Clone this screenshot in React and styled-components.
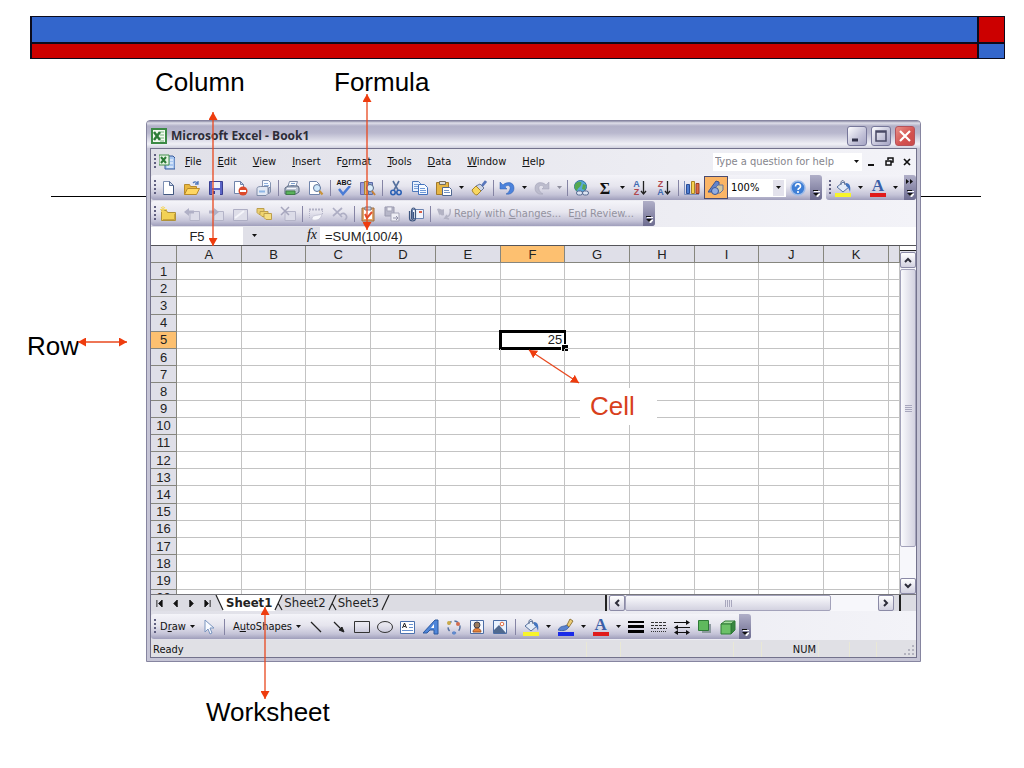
import React from "react";
import styled, { createGlobalStyle } from "styled-components";

const GlobalStyle = createGlobalStyle`
  * {
    box-sizing: border-box;
  }
  body {
    margin: 0;
    background: #fff;
    font-family: "Liberation Sans", Arial, sans-serif;
  }
  button {
    margin: 0;
    padding: 0;
    border: 0;
    background: none;
    font: inherit;
    color: inherit;
  }
`;

const Slide = styled.main`
  position: relative;
  min-height: 100vh;
  padding-top: 16px;
  overflow: hidden;
`;

const Banner = styled.header`
  display: grid;
  grid-template-columns: 1fr 25px;
  grid-template-rows: 25px 14px;
  gap: 2px;
  margin: 0 19px 0 30px;
  padding: 1px 1px 1px 2px;
  background: #0b0b1c;
`;

const Block = styled.div`
  background: ${({ $red }) => ($red ? "#cc0000" : "#3366cc")};
`;

const Rule = styled.div`
  position: absolute;
  top: 196px;
  left: 51px;
  right: 43px;
  height: 1px;
  background: #000;
`;

const Label = styled.div`
  position: absolute;
  left: ${({ $x }) => $x}px;
  top: ${({ $y }) => $y}px;
  font-size: 26px;
  line-height: 30px;
  color: #000;
`;

const CellLabel = styled(Label)`
  padding: 3px 22px 4px 10px;
  background: #fff;
  color: #d8401c;
`;

const Arrows = styled.svg`
  position: absolute;
  top: 0;
  left: 0;
  pointer-events: none;
`;

const Window = styled.section`
  position: relative;
  margin: 61px 103px 0 146px;
  padding: 0 3px 3px;
  border: 1px solid #8685a0;
  border-radius: 4px 4px 0 0;
  background: #c6c5d6;
  font-family: "DejaVu Sans Condensed", Tahoma, "DejaVu Sans", sans-serif;
  font-size: 11px;
  color: #111;
`;

const TitleBar = styled.div`
  display: flex;
  align-items: center;
  height: 27px;
  margin: 0 -3px;
  padding: 2px 5px 0 4px;
  border-radius: 3px 3px 0 0;
  background: linear-gradient(
    #8f8ea8 0,
    #e0e0ea 2px,
    #b2b1c8 5px,
    #b9b8ce 12px,
    #f0f0f6 23px,
    #d0d0de 100%
  );
  h1 {
    flex: 1;
    margin: 0 0 0 4px;
    font-family: "Open Sans", "Trebuchet MS", sans-serif;
    font-size: 12px;
    font-weight: 700;
    line-height: 16px;
    color: #2d2d38;
  }
`;

const CaptionButton = styled.button`
  display: flex;
  width: 20px;
  height: 20px;
  margin-left: 4px;
  border: 1px solid ${({ $close }) => ($close ? "#b5525a" : "#77779a")};
  border-radius: 3px;
  background: ${({ $close }) =>
    $close
      ? "linear-gradient(135deg, #e89088, #d4514f 60%, #c94a4a)"
      : "linear-gradient(135deg, #fdfdff, #c3c2d8 60%, #a6a5c4)"};
`;

const Client = styled.div`
  border: 1px solid #73728c;
  background: #e0e0e8;
`;

const MenuBar = styled.nav`
  display: flex;
  align-items: center;
  height: 25px;
  background: linear-gradient(90deg, #e0e0e8, #f3f3f8);
`;

const MenuItem = styled.button`
  padding: 0 8px;
  line-height: 16px;
`;

const HelpBox = styled.div`
  display: flex;
  align-items: center;
  width: 149px;
  height: 18px;
  margin-left: auto;
  background: #fff;
  input {
    flex: 1;
    min-width: 0;
    padding: 0 2px;
    border: 0;
    background: none;
    font: inherit;
  }
  input::placeholder {
    color: #85858c;
    opacity: 1;
  }
`;

const DocButton = styled.button`
  display: flex;
  justify-content: center;
  width: 18px;
`;

const ToolRow = styled.div`
  display: flex;
  gap: 4px;
  height: ${({ $h }) => $h}px;
  padding-top: ${({ $top }) => $top || 0}px;
  background: linear-gradient(90deg, #e0e0e8, #f3f3f8);
`;

const Toolbar = styled.div`
  display: flex;
  align-items: center;
  height: 25px;
  flex: ${({ $grow }) => ($grow ? 1 : "none")};
  border-radius: 3px;
  overflow: hidden;
  background: linear-gradient(#f4f4f9, #e6e5ee 45%, #c4c3d7 80%, #9f9ebb);
  color: ${({ $disabled }) => ($disabled ? "#93929f" : "#111")};
`;

const Handle = styled.span`
  width: 5px;
  height: 16px;
  background: repeating-linear-gradient(#5f5f80 0 2px, transparent 2px 4px) 3px 0 /
    2px 100% no-repeat;
`;

const Tool = styled.button`
  display: flex;
  align-items: center;
  justify-content: center;
  width: ${({ $w }) => $w || 24}px;
  height: 23px;
  ${({ $on }) => $on && "border: 1px solid #4b4b6f; background: #fbb566;"}
`;

const TextTool = styled.button`
  display: flex;
  align-items: center;
  gap: ${({ $tight }) => ($tight ? 2 : 4)}px;
  padding: 0 3px 0 4px;
  line-height: 16px;
  white-space: nowrap;
`;

const Separator = styled.span`
  width: ${({ $w }) => $w || 4}px;
  height: 16px;
  background: linear-gradient(#8584a4, #8584a4) center / 1px 100% no-repeat;
`;

const CaretButton = styled.button`
  display: flex;
  align-items: center;
  justify-content: center;
  width: ${({ $w }) => $w || 11}px;
  height: 16px;
`;

const More = styled.button`
  display: flex;
  flex-direction: column;
  align-items: center;
  justify-content: ${({ $double }) => ($double ? "space-between" : "flex-end")};
  width: 12px;
  height: 25px;
  margin-left: ${({ $gap }) => ($gap ? `${$gap}px` : "auto")};
  padding: 4px 0 3px;
  background: linear-gradient(#b0afc8, #6d6c90);
`;

const Zoom = styled.div`
  display: flex;
  align-items: center;
  width: 58px;
  height: 18px;
  padding-right: 1px;
  background: #fff;
  input {
    width: 45px;
    padding: 0 0 0 3px;
    border: 0;
    background: none;
    font: inherit;
  }
  button {
    background: #e3e2ec;
  }
`;

const FormulaBar = styled.div`
  display: flex;
  align-items: stretch;
  height: 18px;
  font-family: "Liberation Sans", Arial, sans-serif;
  font-size: 13px;
  input {
    border: 0;
    background: #fff;
    font: inherit;
    color: #222;
  }
  .name {
    width: 92px;
    padding: 0;
    text-align: center;
  }
  .fx {
    width: 55px;
    text-align: right;
    padding-right: 3px;
    font-family: "Liberation Serif", serif;
    font-style: italic;
    font-size: 14px;
    line-height: 16px;
  }
  .formula {
    flex: 1;
    min-width: 0;
    padding: 0 5px;
  }
`;

const SheetArea = styled.div`
  display: flex;
  height: 349px;
  overflow: hidden;
  border-top: 1px solid #55555a;
  background: #fff;
`;

const GridBox = styled.div`
  flex: 1;
  min-width: 0;
  overflow: hidden;
`;

const Grid = styled.table`
  width: 100%;
  height: 361px;
  table-layout: fixed;
  border-collapse: separate;
  border-spacing: 0;
  font-family: "Liberation Sans", Arial, sans-serif;
  font-size: 13px;
  line-height: 15px;
  color: #222;
  col.rows {
    width: 26px;
  }
  col.rest {
    width: 11px;
  }
`;

const Head = styled.th`
  padding: 0;
  height: 17px;
  border-right: 1px solid #86867e;
  border-bottom: 1px solid #86867e;
  background: ${({ $on }) => ($on ? "#fdc070" : "#dfdfe8")};
  font-weight: 400;
  text-align: center;
`;

const Cell = styled.td`
  position: relative;
  padding: 0 2px 0 0;
  border-right: 1px solid #c3c3c3;
  border-bottom: 1px solid #c3c3c3;
  text-align: right;
`;

const Selection = styled.span`
  position: absolute;
  inset: -2px;
  border: 3px solid #000;
  border-right-width: 2px;
  &::after {
    content: "";
    position: absolute;
    right: -4px;
    bottom: -4px;
    width: 6px;
    height: 6px;
    border: 1px solid #fff;
    border-width: 1px 0 0 1px;
    background: #000;
  }
`;

const VScroll = styled.div`
  display: flex;
  flex-direction: column;
  width: 16px;
  margin-top: 4px;
  padding-top: 1px;
  border-top: 1px solid #222;
  background: #e0e0e8;
`;

const HScroll = styled.div`
  display: flex;
  width: 294px;
  padding: 0 5px 0 2px;
  border-left: 2px solid #222;
`;

const ScrollButton = styled.button`
  display: flex;
  align-items: center;
  justify-content: center;
  width: 16px;
  height: 16px;
  border: 1px solid #8b8aa6;
  border-radius: 2px;
  background: linear-gradient(#fff, #d2d1e0);
`;

const Track = styled.div`
  display: flex;
  flex-direction: ${({ $row }) => ($row ? "row" : "column")};
  flex: 1;
  padding: ${({ $row }) => ($row ? "0 47px 0 0" : "1px 0 31px")};
  background: #f7f7fb;
`;

const Thumb = styled.div`
  display: flex;
  align-items: center;
  justify-content: center;
  flex: 1;
  border: 1px solid #a3a2ba;
  border-radius: 2px;
  background: linear-gradient(
    ${({ $row }) => ($row ? "180deg" : "90deg")},
    #fafafd,
    #d3d2e0
  );
  &::after {
    content: "";
    width: 7px;
    height: 7px;
    background: repeating-linear-gradient(
      ${({ $row }) => ($row ? "90deg" : "180deg")},
      #a8a7bd 0 1px,
      #e4e3ee 1px 2px
    );
  }
`;

const TabRow = styled.div`
  display: flex;
  height: 17px;
  border-top: 1px solid #77777c;
  background: #dcdce3;
  .fill {
    flex: 1;
  }
  .corner {
    width: 17px;
    border-left: 2px solid #222;
  }
`;

const NavButton = styled.button`
  display: flex;
  align-items: center;
  justify-content: center;
  width: 16px;
  height: 16px;
`;

const Tab = styled.button`
  height: 16px;
  padding: 0 1px;
  font-size: 13px;
  line-height: 14px;
  color: #222;
  background: ${({ $on }) => ($on ? "#fff" : "transparent")};
  font-weight: ${({ $on }) => ($on ? 700 : 400)};
`;

const StatusBar = styled.footer`
  display: flex;
  align-items: center;
  height: 17px;
  padding: 2px 0 0 2px;
  background: #e0e0e5;
  .ready {
    flex: 1;
  }
`;

const StatusCell = styled.span`
  width: ${({ $w }) => $w}px;
  height: 15px;
  padding-right: 2px;
  border-left: 1px solid #e9e8d6;
  line-height: 15px;
  text-align: right;
`;

const icons = {
  excel: (
    <>
      <path d="M1 1h14v14H1z" fill="#f4faf2" stroke="#3c8a45" strokeWidth="2" />
      <path d="M9 4h4M9 7h4M9 10h4M9 13h4" stroke="#75b57b" />
      <path d="M3 4l6 8M9 4l-6 8" stroke="#2d7b37" strokeWidth="2.5" />
    </>
  ),
  book: (
    <>
      <path d="M6 2h8l2 2v11H6z" fill="#a9c7f1" stroke="#35589b" />
      <path d="M11 6h3M11 9h3M8 13h6" stroke="#fff" />
      <path d="M0 1h10v10H0z" fill="#e7f4e5" stroke="#44904c" />
      <path d="M2 3l5 6M7 3l-5 6" stroke="#2d7b37" strokeWidth="2" />
    </>
  ),
  page: (
    <>
      <path d="M3.5 1.5h6l4 4v9h-10z" fill="#fff" stroke="#7d8fb3" />
      <path d="M13.500 5.500v9h-10" fill="none" stroke="#42577f" />
      <path d="M9.500 1.500v4h4z" fill="#cfd9ec" stroke="#5d7199" />
    </>
  ),
  open: (
    <>
      <path d="M.5 14.500v-10h5l1 2h6v3" fill="#e9b73f" stroke="#b88a2c" />
      <path d="M.5 14.500l3-6h12l-3 6z" fill="#ffd761" stroke="#b88a2c" />
      <path d="M9 3c2-2 4-1 5 1m0-3v3h-3" fill="none" stroke="#4d76ba" strokeWidth="1.3" />
    </>
  ),
  save: (
    <>
      <path d="M1.500 1.500h13v13h-13z" fill="#5b64c6" stroke="#3a3f92" />
      <path d="M4 2h8v6H4z" fill="#edf1fa" />
      <path d="M4 10h8v5H4z" fill="#c9cde8" />
      <path d="M5 11h2v3H5z" fill="#3a3f92" />
    </>
  ),
  permission: (
    <>
      <path d="M2.500 1.500h6l3 3v9h-9z" fill="#fff" stroke="#7084ab" />
      <path d="M8.500 1.500v3h3z" fill="#cfd9ec" stroke="#7084ab" />
      <circle cx="11" cy="11" r="4.500" fill="#dc4a2c" />
      <path d="M8 11h6" stroke="#fff" strokeWidth="2" />
    </>
  ),
  mail: (
    <>
      <path d="M6.500.5h6l2 2v9h-8z" fill="#f7faff" stroke="#8594b2" />
      <path d="M8 3.500h4M8 5.500h5" stroke="#8fb0dd" />
      <path d="M1 8.500c0-2 3-2 5-2h6v7l-2 2H1z" fill="#e3e9f4" stroke="#7e8ba7" />
      <path d="M3 10.500h6v2H3z" fill="#8fb7e6" />
      <path d="M12.500 8l2-1v5l-2 2z" fill="#b9c3d8" stroke="#7e8ba7" />
    </>
  ),
  print: (
    <>
      <path d="M5.500 1.500h8l-2 6h-8z" fill="#fbfdff" stroke="#7e8ba7" />
      <path d="M7 3.500h4M6.500 5.500h4" stroke="#7fa0cf" />
      <path d="M1 8l3-2h10l1 2v4l-3 2H1z" fill="#b9c1d0" stroke="#56657f" />
      <path d="M2 11h9v3.500H2z" fill="#59b25a" stroke="#3f7c47" />
      <path d="M3 8.500h9" stroke="#f4f6fb" />
    </>
  ),
  preview: (
    <>
      <path d="M1.500 1.500h7l3 3v10h-10z" fill="#fff" stroke="#7084ab" />
      <circle cx="9" cy="8" r="3.500" fill="#cfe8fb" stroke="#5d7399" />
      <path d="M11.500 11l3 3.500" stroke="#c8933a" strokeWidth="2.200" />
    </>
  ),
  research: (
    <>
      <path d="M.5 2.500h4v12h-4z" fill="#9a9bd8" stroke="#6a6bb0" />
      <path d="M4.500 1.500h4v13h-4z" fill="#e0bf6c" stroke="#a5803a" />
      <path d="M8.500 2.500h4v12h-4z" fill="#92a6d8" stroke="#5a68a4" />
      <circle cx="10" cy="8" r="3.500" fill="#d9edfb" stroke="#566887" />
      <path d="M12 11l3 4" stroke="#c8833a" strokeWidth="2" />
    </>
  ),
  cut: (
    <>
      <path d="M5 1l5 9M11 1L6 10" stroke="#56719f" strokeWidth="1.6" />
      <circle cx="5" cy="12.5" r="2.2" fill="none" stroke="#2d62b5" strokeWidth="1.6" />
      <circle cx="11" cy="12.5" r="2.2" fill="none" stroke="#2d62b5" strokeWidth="1.6" />
    </>
  ),
  copy: (
    <>
      <path d="M.5 1.500h6l2 2v8h-8z" fill="#e9f2ff" stroke="#4f79ba" />
      <path d="M2 4.500h4M2 6.500h4M2 8.500h4" stroke="#7da2d8" />
      <path d="M6.500 4.500h6l3 3v7h-9z" fill="#f5f9ff" stroke="#4271bd" />
      <path d="M8 8.500h5M8 10.500h6M8 12.500h6" stroke="#6d98d7" />
    </>
  ),
  paste: (
    <>
      <path d="M.5 2.500h12v12H.5z" fill="#e5b544" stroke="#a37a2c" />
      <path d="M3.500 1.500h6v3h-6z" fill="#ddd" stroke="#776d59" />
      <path d="M6.500 7.500h7l2 2v6h-9z" fill="#fff" stroke="#4f6690" />
      <path d="M8 10.500h5M8 12.500h6" stroke="#7392c4" />
    </>
  ),
  brush: (
    <>
      <path d="M15 1l-4 5" stroke="#5876bb" strokeWidth="2.8" />
      <path d="M9 4l4 4-3 3-5-5z" fill="#cdd5e6" stroke="#69799c" />
      <path d="M5 6l5 5-4 4c-2 0-4-2-5-5z" fill="#f8d760" stroke="#a8842c" />
    </>
  ),
  undo: (
    <path d="M1 2v7h7L6 7c3-3 6-1 5 2-1 3-2 4-4 5 5 1 8-2 8-6 0-6-7-7-11-3z" fill="#4c83dd" stroke="#2d5dac" strokeWidth=".5" />
  ),
  redo: (
    <path d="M15 2v7H8l2-2C7 4 4 6 5 9c0 2 2 4 4 5-5 1-8-2-8-6 0-6 7-7 11-3z" fill="#bcbccd" stroke="#a0a0b4" strokeWidth=".5" />
  ),
  link: (
    <>
      <circle cx="7.5" cy="6.5" r="6" fill="#58a8d8" stroke="#2d6f9e" />
      <path d="M3 3c3-2 7-2 5 2s-3 2-4 6C1 9 1 5 3 3zM10 4l3 1-1 5-3-1z" fill="#55a850" />
      <rect x="3.5" y="11" width="6" height="4" rx="2" fill="#dde5f3" stroke="#56698f" />
      <rect x="9.5" y="11" width="6" height="4" rx="2" fill="#dde5f3" stroke="#56698f" />
    </>
  ),
  chart: (
    <>
      <path d="M.5 1v13.500H15" fill="none" stroke="#7b8fbe" />
      <path d="M2.500 4.500h3v9h-3z" fill="#4e7ed2" stroke="#2c4e96" />
      <path d="M7.500 1.500h3v12h-3z" fill="#f7d352" stroke="#a98524" />
      <path d="M12 3.500h3v10h-3z" fill="#e06c45" stroke="#983a26" />
    </>
  ),
  drawing: (
    <>
      <path d="M0 12L8 1l3 1v10z" fill="#6284cc" stroke="#3c5592" />
      <path d="M7 8l3-3h5v5l-3 3H7z" fill="#d2c8a2" stroke="#66749c" />
      <circle cx="7" cy="11" r="3.5" fill="#94aee2" stroke="#3c5592" />
    </>
  ),
  bucket: (
    <>
      <path d="M2 8l6-5 6 5-6 5z" fill="#e3ebf7" stroke="#56719f" />
      <path d="M6 6c-1-6 4-6 4 0" fill="none" stroke="#5c6e8f" />
      <path d="M11 4c4 0 5 4 4 9-1-3-2-5-4-6z" fill="#4375c0" />
    </>
  ),
  pen: (
    <>
      <path d="M0 12c3-5 6-3 9-5l2 2c-3 4-6 4-11 3z" fill="#5a82cf" stroke="#3f62a5" />
      <path d="M9 7l3-6 3 2-4 6z" fill="#edcd75" stroke="#94793d" />
    </>
  ),
  folder: (
    <>
      <path d="M1.500 4.500h5l1 2h8v8h-14z" fill="#f2d155" stroke="#b0923a" />
      <path d="M3 13.500h12M14.500 8v6" stroke="#cba53c" />
      <path d="M3 0v7M0 3.500h7M1 1l4 5M5 1L1 6" stroke="#f3d662" />
    </>
  ),
  noteBack: (
    <>
      <path d="M6 5.500h9.500v9H6z" fill="#dcdce8" stroke="#b4b4c8" />
      <path d="M0 6l5-4v2.500h5v3H5V10z" fill="#b0b0c6" />
    </>
  ),
  noteNext: (
    <>
      <path d="M6 5.500h9.500v9H6z" fill="#dcdce8" stroke="#b4b4c8" />
      <path d="M11 6L6 2v2.500H1v3h5V10z" fill="#b0b0c6" />
    </>
  ),
  note: (
    <>
      <path d="M1.500 3.500h14v11h-14z" fill="#dedee9" stroke="#aeaec4" />
      <path d="M3 12l9-7" stroke="#f4f4fa" strokeWidth="2" />
    </>
  ),
  notes: (
    <>
      <path d="M1 2.500h7v6H3l-2-2z" fill="#ecd071" stroke="#bd9f4c" />
      <path d="M4 5.500h8v5H6l-2-2z" fill="#f0d56f" stroke="#bd9f4c" />
      <path d="M8 7.500h7.500v6H10l-2-2z" fill="#f5de83" stroke="#bd9f4c" />
    </>
  ),
  noteDelete: (
    <>
      <path d="M5 5.500h10.500v9H5z" fill="#dcdce8" stroke="#b4b4c8" />
      <path d="M1 1l8 8M9 1L1 9" stroke="#a6a6bd" strokeWidth="1.5" />
    </>
  ),
  ink: (
    <>
      <path d="M1 3.500h14" stroke="#b2b2c6" strokeDasharray="2 1" strokeWidth="2" />
      <path d="M1.500 5v7M14.500 5v3" stroke="#b2b2c6" strokeDasharray="1 1" />
      <path d="M4 14c-1-6 6-4 10-6-1 5-4 7-10 6z" fill="#f7f7fb" stroke="#c4c4d4" />
    </>
  ),
  cross: (
    <path d="M1 2l9 9M10 2l-9 8M8 9c4-4 9 1 5 5" fill="none" stroke="#aeaec4" strokeWidth="1.7" />
  ),
  clipboard: (
    <>
      <path d="M2 2h12v13H2z" fill="#e2a66b" stroke="#9c6c3f" />
      <path d="M4 4h8v9H4z" fill="#fff" />
      <path d="M5 1h6v3H5z" fill="#cfd3df" stroke="#767c90" />
      <path d="M5 8l2 4 5-6" fill="none" stroke="#e04c2e" strokeWidth="2" />
    </>
  ),
  saveGrey: (
    <>
      <path d="M1 1h9v9H1z" fill="#b7b7c9" stroke="#9999ae" />
      <path d="M3 1h5v4H3zM7 7h8v8H7z" fill="#eeeef5" stroke="#a5a5b8" />
      <path d="M9 12h5m-2-2l2 2-2 2" fill="none" stroke="#9292a9" />
    </>
  ),
  attach: (
    <>
      <path d="M4.500 3.500h11v9h-11z" fill="#f2f5fc" stroke="#6d84b0" />
      <path d="M11 5h3v2h-3z" fill="#d95f44" />
      <path d="M1.500 5v7c0 4 6 4 6 0V5c0-4-4-4-4 0v7c0 2 2 2 2 0V6" fill="none" stroke="#3d557e" strokeWidth="1.200" />
    </>
  ),
  reply: (
    <>
      <path d="M1 3c3-2 4 2 7 0v6c-3 2-3-2-5 0l2 5z" fill="#b3b3c4" />
      <path d="M14 3c1 5-1 8-5 9l2-3m-2 3l4 1" fill="none" stroke="#b3b3c4" strokeWidth="1.5" />
    </>
  ),
  pointer: (
    <path d="M4 1v12l3-3 2 5 2-1-2-5h4z" fill="#f7faff" stroke="#7a95bf" />
  ),
  line: <path d="M3 3l10 10" stroke="#222" strokeWidth="1.2" />,
  arrow: (
    <>
      <path d="M3 3l7 7" stroke="#222" strokeWidth="1.2" />
      <path d="M13 13l-5-2 3-3z" fill="#222" stroke="#222" />
    </>
  ),
  rect: <path d="M.5 2.500h15v11H.5z" fill="none" stroke="#333" />,
  oval: (
    <ellipse cx="8" cy="8" rx="7.5" ry="5.5" fill="none" stroke="#333" />
  ),
  textbox: (
    <>
      <path d="M.5 2.500h14v12H.5z" fill="#fff" stroke="#4c72ae" />
      <path d="M2.500 9l2-5 2 5M3.500 7.500h2" fill="none" stroke="#222" />
      <path d="M9 5.500h4M9 8.500h4M2 11.500h11" stroke="#6590cf" />
    </>
  ),
  wordart: (
    <>
      <path d="M0 14L12 1h3v14h-4v-4H7l-3 3z" fill="#4f86da" stroke="#2c589e" />
      <path d="M8 9h3V5z" fill="#fff" />
    </>
  ),
  diagram: (
    <>
      <circle cx="8" cy="8" r="6" fill="none" stroke="#56719f" strokeWidth="1.5" strokeDasharray="4 3" />
      <circle cx="3" cy="4" r="2" fill="#c9a949" />
      <circle cx="12" cy="5" r="2" fill="#d46c4e" />
      <circle cx="8" cy="14" r="1.8" fill="#5f8ad0" />
    </>
  ),
  clipart: (
    <>
      <path d="M1.500 1.500h13v13h-13z" fill="#f4f8ff" stroke="#4c6da5" />
      <circle cx="8" cy="6" r="3" fill="#9c7b5d" stroke="#3e4151" />
      <path d="M4 13c0-5 8-5 8 0z" fill="#e8843a" stroke="#9b5023" />
    </>
  ),
  picture: (
    <>
      <path d="M1.500 1.500h13v13h-13z" fill="#eaf3ff" stroke="#4c6da5" />
      <circle cx="10" cy="5" r="1.8" fill="#fff" stroke="#e36b3d" />
      <path d="M2 14v-3l5-5 7 8z" fill="#50698f" />
    </>
  ),
  weight: (
    <>
      <path d="M0 3h16" stroke="#000" strokeWidth="2" />
      <path d="M0 7.5h16" stroke="#000" strokeWidth="3" />
      <path d="M0 12.5h16" stroke="#000" strokeWidth="3" />
    </>
  ),
  dash: (
    <>
      <path d="M0 3.5h16M0 6.5h16" stroke="#333" strokeDasharray="3 1" />
      <path d="M0 9.5h16" stroke="#333" strokeDasharray="2 1" />
      <path d="M0 12.5h16" stroke="#333" strokeDasharray="1 1" />
    </>
  ),
  arrows: (
    <>
      <path d="M0 3.5h14M2 8.5h14M1 13.5h14" stroke="#111" />
      <path d="M16 3.5l-4-2.5v5zM0 8.5l4-2.5v5zM16 13.5l-4-2.5v5zM0 13.5l4-2.5v5z" fill="#111" />
    </>
  ),
  shadow: (
    <>
      <path d="M5 5h9v9H5z" fill="#8e9aa0" />
      <path d="M1.500 1.500h10v10h-10z" fill="#5fb95d" stroke="#2f7a37" />
    </>
  ),
  cube: (
    <>
      <path d="M1 5l4-3h10l-4 3z" fill="#a6dda0" stroke="#2f7a37" />
      <path d="M11 5l4-3v9l-4 4z" fill="#388740" stroke="#2f7a37" />
      <path d="M1 5h10v10H1z" fill="#6cc168" stroke="#2f7a37" />
    </>
  ),
  help: (
    <>
      <circle cx="8" cy="8" r="7" fill="#3f7fd6" stroke="#9fbce8" strokeWidth="1.5" />
      <path d="M5.5 6.5c0-4 5-3 5 0 0 2-2.5 1.5-2.5 3.5M8 11v2" fill="none" stroke="#fff" strokeWidth="1.6" />
    </>
  ),
};

const Svg = ({ name }) => (
  <svg width="16" height="16" viewBox="0 0 16 16" aria-hidden="true">
    {icons[name]}
  </svg>
);

const Triangle = ({ dim }) => (
  <svg width="5" height="3" viewBox="0 0 5 3" aria-hidden="true">
    <path d="M0 0h5L2.5 3z" fill={dim ? "#8e8e9c" : "#111"} />
  </svg>
);

const Caret = ({ dim, w, label = "Options" }) => (
  <CaretButton $w={w} aria-label={label}>
    <Triangle dim={dim} />
  </CaretButton>
);

const Icon = ({ name, w, on }) => (
  <Tool $w={w} $on={on} aria-label={name}>
    <Svg name={name} />
  </Tool>
);

const Glyph = styled.span`
  display: flex;
  flex-direction: column;
  align-items: center;
  justify-content: flex-end;
  width: 16px;
  height: 18px;
  font-family: "Liberation Serif", serif;
  font-weight: 700;
  font-size: ${({ $size }) => $size || 16}px;
  line-height: ${({ $lh }) => $lh || 16}px;
  color: ${({ $color }) => $color || "#111"};
`;

const Swatch = styled.span`
  width: 16px;
  height: 4px;
  flex: none;
  background: ${({ $color }) => $color};
`;

const SortLetters = styled.span`
  display: flex;
  flex-direction: column;
  font: 700 9px / 8px "Liberation Sans", Arial, sans-serif;
  span:first-child {
    color: ${({ $flip }) => ($flip ? "#b1494f" : "#416bb3")};
  }
  span:last-child {
    color: ${({ $flip }) => ($flip ? "#416bb3" : "#b1494f")};
  }
`;

const Spell = styled.span`
  display: flex;
  flex-direction: column;
  align-items: center;
  font: 700 7px / 6px "Liberation Sans", Arial, sans-serif;
`;

const Sort = ({ flip }) => (
  <Tool aria-label={flip ? "Sort descending" : "Sort ascending"}>
    <SortLetters $flip={flip}>
      <span>{flip ? "Z" : "A"}</span>
      <span>{flip ? "A" : "Z"}</span>
    </SortLetters>
    <svg width="7" height="16" viewBox="0 0 7 16" aria-hidden="true">
      <path d="M3.5 1v13M1 11l2.5 3L6 11" fill="none" stroke="#222" strokeWidth="1.3" />
    </svg>
  </Tool>
);

const Painted = ({ name, color, w }) => (
  <Tool $w={w} aria-label={name}>
    <Glyph>
      <svg width="16" height="14" viewBox="0 0 16 14" aria-hidden="true">
        {icons[name]}
      </svg>
      <Swatch $color={color} />
    </Glyph>
  </Tool>
);

const FontColor = ({ w }) => (
  <Tool $w={w} aria-label="Font color">
    <Glyph $color="#3a5fa8" $size={17} $lh={14}>
      A
      <Swatch $color="#e01a1a" />
    </Glyph>
  </Tool>
);

const Overflow = ({ double, gap }) => (
  <More $double={double} $gap={gap} aria-label="Toolbar options">
    {double && (
      <svg width="8" height="5" viewBox="0 0 8 5" aria-hidden="true">
        <path d="M0 0l3 2.5L0 5zM4 0l3 2.5L4 5z" fill="#111" />
      </svg>
    )}
    <svg width="8" height="8" viewBox="0 0 8 8" aria-hidden="true">
      <path d="M2 2.5h6M3 5h5L5.5 8z" fill="#fff" stroke="#fff" />
      <path d="M1 1.5h5" stroke="#111" />
      <path d="M1 4h6L4 7z" fill="#111" />
    </svg>
  </More>
);

const Chevron = ({ d }) => (
  <svg width="8" height="8" viewBox="0 0 8 8" aria-hidden="true">
    <path d={d} fill="none" stroke="#2d2d3a" strokeWidth="2" />
  </svg>
);

const Slash = ({ d, on }) => (
  <svg width="10" height="16" viewBox="0 0 10 16" aria-hidden="true">
    {on && <path d={on} fill="#fff" />}
    <path d={d} fill="none" stroke="#222" strokeWidth="1.2" />
  </svg>
);

const menus = ["File", "Edit", "View", "Insert", "Format", "Tools", "Data", "Window", "Help"];
const columns = ["A", "B", "C", "D", "E", "F", "G", "H", "I", "J", "K"];
const rows = Array.from({ length: 20 }, (_, i) => i + 1);

const shapes = [
  "line",
  "arrow",
  "rect",
  "oval",
  "textbox",
  "wordart",
  "diagram",
  "clipart",
  "picture",
];

const navs = [
  ["First sheet", "M1 0v8M7 0v8L3 4z"],
  ["Previous sheet", "M6 0v8L2 4z"],
  ["Next sheet", "M2 0v8l4-4z"],
  ["Last sheet", "M1 0v8l4-4zM7 0v8"],
];

const arrowLines = [
  [213, 112, 213, 246],
  [367, 94, 367, 230],
  [78, 342, 127, 342],
  [529, 350, 579, 383],
  [265, 607, 265, 699],
];

function Menu({ text }) {
  // index of the underlined letter
  const at = text === "Format" ? 1 : 0;
  return (
    <MenuItem>
      {text.slice(0, at)}
      <u>{text[at]}</u>
      {text.slice(at + 1)}
    </MenuItem>
  );
}

function StandardToolbar() {
  return (
    <ToolRow $h={27} $top={1}>
      <Toolbar>
        <Handle />
        <Icon name="page" />
        <Icon name="open" />
        <Icon name="save" />
        <Icon name="permission" />
        <Icon name="mail" />
        <Separator />
        <Icon name="print" />
        <Icon name="preview" />
        <Separator />
        <Tool aria-label="Spelling">
          <Spell>
            ABC
            <svg width="14" height="10" viewBox="0 0 14 10" aria-hidden="true">
              <path d="M2 3l4 5 7-8" fill="none" stroke="#4a7cd6" strokeWidth="2.5" />
            </svg>
          </Spell>
        </Tool>
        <Icon name="research" />
        <Separator />
        <Icon name="cut" />
        <Icon name="copy" />
        <Icon name="paste" />
        <Caret />
        <Icon name="brush" />
        <Separator />
        <Icon name="undo" />
        <Caret />
        <Icon name="redo" />
        <Caret dim />
        <Separator />
        <Icon name="link" />
        <Tool aria-label="AutoSum">
          <Glyph>Σ</Glyph>
        </Tool>
        <Caret />
        <Sort />
        <Sort flip />
        <Separator />
        <Icon name="chart" />
        <Icon name="drawing" on />
        <Zoom>
          <input aria-label="Zoom" defaultValue="100%" />
          <Caret label="Zoom levels" />
        </Zoom>
        <Icon name="help" />
        <Overflow />
      </Toolbar>
      <Toolbar $grow>
        <Handle />
        <Painted name="bucket" color="#f7f42a" />
        <Caret />
        <FontColor />
        <Caret />
        <Overflow double />
      </Toolbar>
    </ToolRow>
  );
}

function ReviewToolbar() {
  return (
    <ToolRow $h={26}>
      <Toolbar $disabled>
        <Handle />
        <Icon name="folder" />
        <Icon name="noteBack" />
        <Icon name="noteNext" />
        <Icon name="note" />
        <Icon name="notes" />
        <Icon name="noteDelete" />
        <Separator />
        <Icon name="ink" />
        <Icon name="cross" />
        <Separator />
        <Icon name="clipboard" />
        <Icon name="saveGrey" />
        <Icon name="attach" />
        <Separator />
        <TextTool $tight disabled>
          <Svg name="reply" />
          <span>
            Reply with <u>C</u>hanges...
          </span>
        </TextTool>
        <TextTool disabled>
          <span>
            E<u>n</u>d Review...
          </span>
        </TextTool>
        <Overflow gap={6} />
      </Toolbar>
    </ToolRow>
  );
}

function DrawToolbar() {
  return (
    <ToolRow $h={29} $top={3}>
      <Toolbar>
        <Handle />
        <TextTool>
          <span>
            D<u>r</u>aw
          </span>
          <Triangle />
        </TextTool>
        <Icon name="pointer" w={23} />
        <Separator $w={8} />
        <TextTool>
          <span>
            A<u>u</u>toShapes
          </span>
          <Triangle />
        </TextTool>
        {shapes.map((name) => (
          <Icon key={name} name={name} w={23} />
        ))}
        <Separator $w={8} />
        <Painted name="bucket" color="#f7f42a" w={23} />
        <Caret w={12} />
        <Painted name="pen" color="#1a2ae8" w={23} />
        <Caret w={12} />
        <FontColor w={23} />
        <Caret w={12} />
        {["weight", "dash", "arrows", "shadow", "cube"].map((name) => (
          <Icon key={name} name={name} w={23} />
        ))}
        <Overflow />
      </Toolbar>
    </ToolRow>
  );
}

function Sheet() {
  return (
    <SheetArea>
      <GridBox>
        <Grid>
          <colgroup>
            <col className="rows" />
            {columns.map((c) => (
              <col key={c} />
            ))}
            <col className="rest" />
          </colgroup>
          <thead>
            <tr>
              <Head />
              {columns.map((c) => (
                <Head key={c} $on={c === "F"}>
                  {c}
                </Head>
              ))}
              <Head />
            </tr>
          </thead>
          <tbody>
            {rows.map((r) => (
              <tr key={r}>
                <Head scope="row" $on={r === 5}>
                  {r}
                </Head>
                {columns.map((c) => (
                  <Cell key={c}>
                    {c === "F" && r === 5 ? (
                      <>
                        25
                        <Selection />
                      </>
                    ) : null}
                  </Cell>
                ))}
                <Cell />
              </tr>
            ))}
          </tbody>
        </Grid>
      </GridBox>
      <VScroll>
        <ScrollButton aria-label="Scroll up">
          <Chevron d="M1 6l3-3 3 3" />
        </ScrollButton>
        <Track>
          <Thumb />
        </Track>
        <ScrollButton aria-label="Scroll down">
          <Chevron d="M1 2l3 3 3-3" />
        </ScrollButton>
      </VScroll>
    </SheetArea>
  );
}

function SheetTabs() {
  return (
    <TabRow>
      {navs.map(([label, d]) => (
        <NavButton key={label} aria-label={label}>
          <svg width="7" height="7" viewBox="0 0 8 8" aria-hidden="true">
            <path d={d} fill="#111" stroke="#111" />
          </svg>
        </NavButton>
      ))}
      <Slash d="M1 0l7 15" on="M1 0h9v16H8z" />
      <Tab $on>Sheet1</Tab>
      <Slash d="M9 0L2 15M5 8l4 7" on="M0 0h9L2 16H0z" />
      <Tab>Sheet2</Tab>
      <Slash d="M9 0L2 15M5 8l4 7" />
      <Tab>Sheet3</Tab>
      <Slash d="M9 0L2 15" />
      <span className="fill" />
      <HScroll>
        <ScrollButton aria-label="Scroll left">
          <Chevron d="M6 1L3 4l3 3" />
        </ScrollButton>
        <Track $row>
          <Thumb $row />
        </Track>
        <ScrollButton aria-label="Scroll right">
          <Chevron d="M2 1l3 3-3 3" />
        </ScrollButton>
      </HScroll>
      <span className="corner" />
    </TabRow>
  );
}

function App() {
  return (
    <Slide>
      <GlobalStyle />
      <Banner>
        <Block />
        <Block $red />
        <Block $red />
        <Block />
      </Banner>
      <Rule />
      <Window>
        <TitleBar>
          <Svg name="excel" />
          <h1>Microsoft Excel - Book1</h1>
          <CaptionButton aria-label="Minimize">
            <svg width="18" height="18" viewBox="0 0 18 18" aria-hidden="true">
              <path d="M4 13h6" stroke="#33334a" strokeWidth="3" />
            </svg>
          </CaptionButton>
          <CaptionButton aria-label="Maximize">
            <svg width="18" height="18" viewBox="0 0 18 18" aria-hidden="true">
              <path d="M4 4h10v10H4zM4 5h10" fill="none" stroke="#4a4a66" strokeWidth="1.5" />
            </svg>
          </CaptionButton>
          <CaptionButton $close aria-label="Close">
            <svg width="18" height="18" viewBox="0 0 18 18" aria-hidden="true">
              <path d="M4 4l10 10M14 4L4 14" stroke="#fff" strokeWidth="2.2" />
            </svg>
          </CaptionButton>
        </TitleBar>
        <Client>
          <MenuBar>
            <Handle />
            <Tool $w={21} aria-label="Workbook">
              <Svg name="book" />
            </Tool>
            {menus.map((m) => (
              <Menu key={m} text={m} />
            ))}
            <HelpBox>
              <input aria-label="Help search" placeholder="Type a question for help" />
              <Caret label="Recent questions" />
            </HelpBox>
            <DocButton aria-label="Minimize workbook">
              <svg width="8" height="8" viewBox="0 0 8 8" aria-hidden="true">
                <path d="M1 7h6" stroke="#111" strokeWidth="2" />
              </svg>
            </DocButton>
            <DocButton aria-label="Restore workbook">
              <svg width="9" height="9" viewBox="0 0 9 9" aria-hidden="true">
                <path d="M3 3V1h5v4H6M1 4h5v4H1z" fill="none" stroke="#111" strokeWidth="1.5" />
              </svg>
            </DocButton>
            <DocButton aria-label="Close workbook">
              <svg width="8" height="8" viewBox="0 0 8 8" aria-hidden="true">
                <path d="M1 1l6 6M7 1L1 7" stroke="#111" strokeWidth="1.7" />
              </svg>
            </DocButton>
          </MenuBar>
          <StandardToolbar />
          <ReviewToolbar />
          <FormulaBar>
            <input className="name" aria-label="Name box" defaultValue="F5" />
            <Caret w={22} label="Names" />
            <span className="fx">fx</span>
            <input className="formula" aria-label="Formula" defaultValue="=SUM(100/4)" />
          </FormulaBar>
          <Sheet />
          <SheetTabs />
          <DrawToolbar />
          <StatusBar>
            <span className="ready">Ready</span>
            <StatusCell $w={34} />
            <StatusCell $w={113} />
            <StatusCell $w={28} />
            <StatusCell $w={57}>NUM</StatusCell>
            <StatusCell $w={31} />
            <StatusCell $w={27} />
            <StatusCell $w={26} />
            <svg width="14" height="14" viewBox="0 0 14 14" aria-hidden="true">
              <path d="M10 2h2v2h-2zM10 6h2v2h-2zM6 6h2v2H6zM10 10h2v2h-2zM6 10h2v2H6zM2 10h2v2H2z" fill="#b3b3bf" />
            </svg>
          </StatusBar>
        </Client>
      </Window>

      <Label $x={155} $y={67}>Column</Label>
      <Label $x={334} $y={67}>Formula</Label>
      <Label $x={27} $y={331}>Row</Label>
      <Label $x={206} $y={697}>Worksheet</Label>
      <CellLabel $x={580} $y={388}>Cell</CellLabel>
      <Arrows width="1024" height="768" viewBox="0 0 1024 768" aria-hidden="true">
        <defs>
          <marker
            id="tip"
            markerUnits="userSpaceOnUse"
            markerWidth="9"
            markerHeight="9"
            refX="8"
            refY="4.5"
            orient="auto-start-reverse"
          >
            <path d="M0 0l8 4.5L0 9z" fill="#ee3c0e" />
          </marker>
        </defs>
        {arrowLines.map(([x1, y1, x2, y2]) => (
          <line
            key={y1}
            x1={x1}
            y1={y1}
            x2={x2}
            y2={y2}
            stroke="#e8481e"
            strokeWidth="1.3"
            markerStart="url(#tip)"
            markerEnd="url(#tip)"
          />
        ))}
      </Arrows>
    </Slide>
  );
}

export default App;
